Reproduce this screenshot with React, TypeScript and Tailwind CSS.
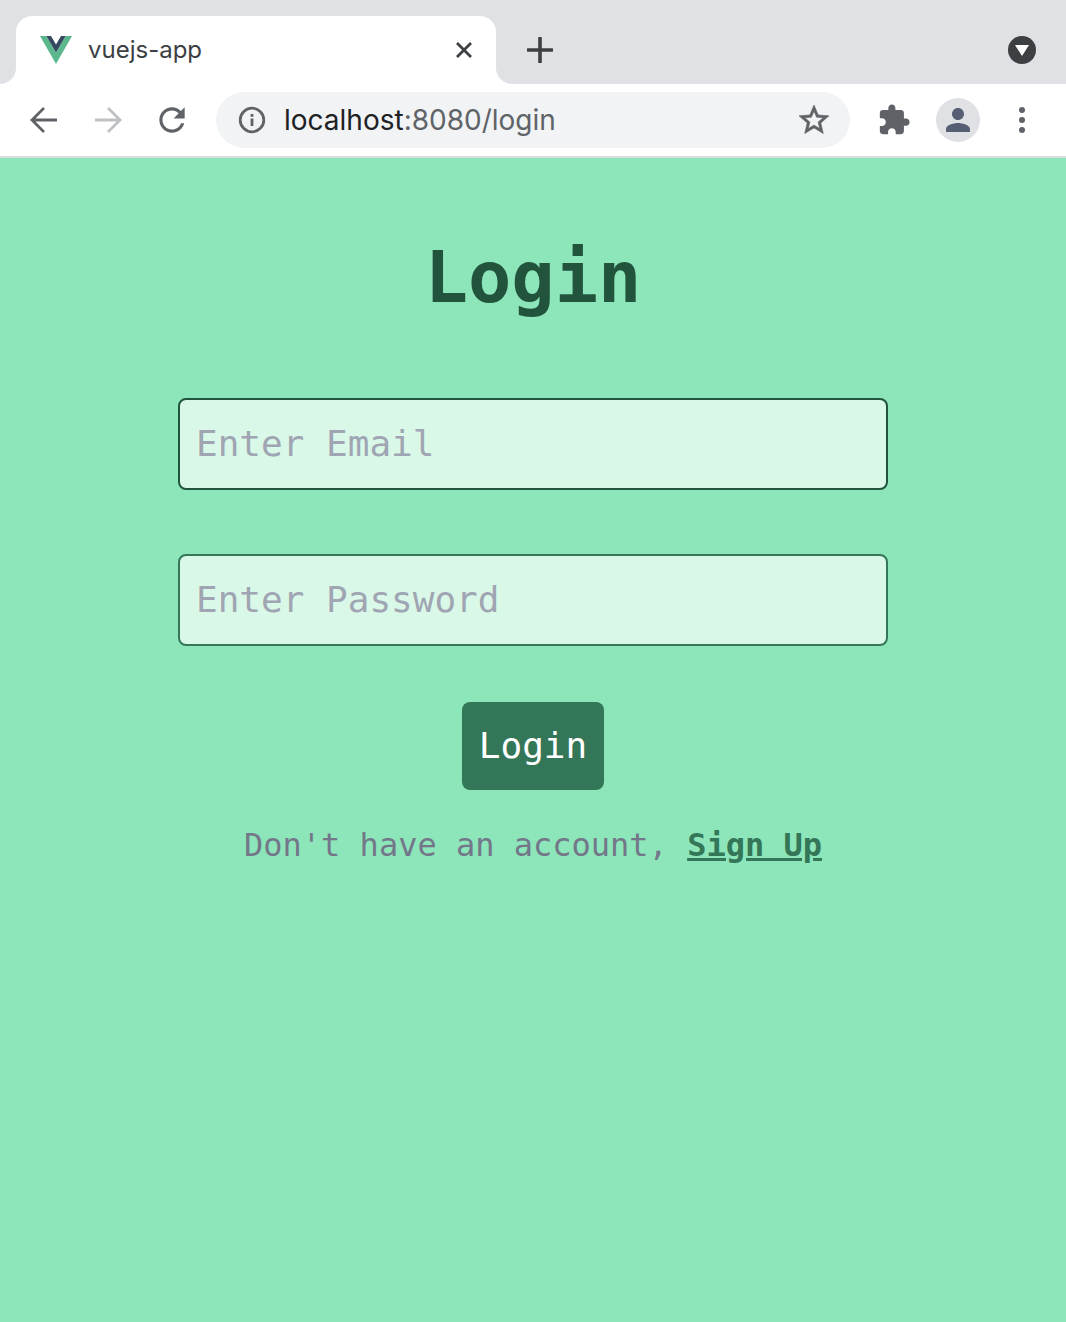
import React from 'react';

const MONO = 'font-["DejaVu_Sans_Mono",monospace]';

const ToolbarIcon = ({ children }: { children: React.ReactNode }) => (
  <div className="w-16 h-14 flex items-center justify-center shrink-0">{children}</div>
);

const VueLogo = () => (
  <svg width="32" height="28" viewBox="0 0 32 28" className="shrink-0 mt-[2px]">
    <polygon points="0,0 6.4,0 16,16.6 25.6,0 32,0 16,28" fill="#5cb88c" />
    <polygon points="6.4,0 11,0 16,8.4 21,0 25.6,0 16,16.6" fill="#35495e" />
  </svg>
);

const BrowserChrome = () => (
  <div className="font-['Inter',sans-serif] shrink-0">
    {/* вкладки */}
    <div className="h-4 bg-[#dfe1e5]" />
    <div className="h-[68px] flex bg-white">
      <div className="w-4 bg-[#dfe1e5] rounded-br-2xl" />
      <div className="w-[480px] bg-[#dfe1e5]">
        <div className="h-full bg-white rounded-t-2xl flex items-center pl-6 pr-[22px] pb-[2px]">
          <VueLogo />
          <span className="ml-4 text-[24px] leading-none text-[#3c4043] flex-1 mt-[2px]">vuejs-app</span>
          <svg width="20" height="20" viewBox="0 0 20 20" className="mt-[2px]">
            <path d="M3 3l14 14M17 3L3 17" stroke="#3c4043" strokeWidth="2.8" />
          </svg>
        </div>
      </div>
      <div className="flex-1 bg-[#dfe1e5] rounded-bl-2xl flex items-center pl-[31px] pr-[30px]">
        <svg width="26" height="26" viewBox="0 0 26 26">
          <path d="M13 1v24M1 13h24" stroke="#3c4043" strokeWidth="3.6" strokeLinecap="round" />
        </svg>
        <div className="ml-auto w-7 h-7 rounded-full bg-[#3c4043] flex items-center justify-center">
          <svg width="14" height="11" viewBox="0 0 14 11">
            <polygon points="0,0 14,0 7,11" fill="#fff" />
          </svg>
        </div>
      </div>
    </div>

    {/* адресная строка */}
    <div className="h-[74px] bg-white border-b-2 border-[#dadce0] flex items-start pt-2 pl-3 pr-3">
      <div className="flex -mt-2 h-[72px] items-center">
        <ToolbarIcon>
          <svg width="30" height="30" viewBox="0 0 30 30" fill="none" stroke="#5f6368" strokeWidth="2.8">
            <path d="M28 15H4M15 3L3 15l12 12" />
          </svg>
        </ToolbarIcon>
        <ToolbarIcon>
          <svg width="30" height="30" viewBox="0 0 30 30" fill="none" stroke="#bdc1c6" strokeWidth="2.8">
            <path d="M2 15h24M15 3l12 12-12 12" />
          </svg>
        </ToolbarIcon>
        <ToolbarIcon>
          <svg width="38" height="38" viewBox="0 0 24 24" fill="#5f6368">
            <path d="M17.65 6.35C16.2 4.9 14.21 4 12 4c-4.42 0-7.99 3.58-7.99 8s3.57 8 7.99 8c3.73 0 6.84-2.55 7.73-6h-2.08c-.82 2.33-3.04 4-5.65 4-3.31 0-6-2.69-6-6s2.69-6 6-6c1.66 0 3.14.69 4.22 1.78L13 11h7V4l-2.35 2.35z" />
          </svg>
        </ToolbarIcon>
      </div>
      <div className="ml-3 w-[634px] h-14 rounded-full bg-[#f1f3f4] flex items-center pl-[22px] pr-[18px]">
        <svg width="28" height="28" viewBox="0 0 28 28" fill="none">
          <circle cx="14" cy="14" r="11.8" stroke="#5f6368" strokeWidth="2.8" />
          <rect x="12.6" y="12.5" width="2.8" height="7.5" fill="#5f6368" />
          <rect x="12.6" y="8" width="2.8" height="2.8" fill="#5f6368" />
        </svg>
        <span className="ml-[18px] text-[28px] leading-none text-[#202124] flex-1">
          localhost<span className="text-[#5f6368]">:8080/login</span>
        </span>
        <svg width="36" height="36" viewBox="0 0 24 24" fill="#5f6368" stroke="#5f6368" strokeWidth="0.4">
          <path d="M22 9.24l-7.19-.62L12 2 9.19 8.63 2 9.24l5.46 4.73L5.82 21 12 17.27 18.18 21l-1.63-7.03L22 9.24zM12 15.4l-3.76 2.27 1-4.28-3.32-2.88 4.38-.38L12 6.1l1.71 4.04 4.38.38-3.32 2.88 1 4.28L12 15.4z" />
        </svg>
      </div>
      <div className="ml-3 flex -mt-2 h-[72px] items-center">
        <ToolbarIcon>
          <svg width="34" height="34" viewBox="0 0 24 24" fill="#5f6368">
            <path d="M20.5 11H19V7c0-1.1-.9-2-2-2h-4V3.5C13 2.12 11.88 1 10.5 1S8 2.12 8 3.5V5H4c-1.1 0-1.99.9-1.99 2v3.8H3.5c1.49 0 2.7 1.21 2.7 2.7s-1.21 2.7-2.7 2.7H2V20c0 1.1.9 2 2 2h3.8v-1.5c0-1.49 1.21-2.7 2.7-2.7 1.49 0 2.7 1.21 2.7 2.7V22H17c1.1 0 2-.9 2-2v-4h1.5c1.38 0 2.5-1.12 2.5-2.5S21.88 11 20.5 11z" />
          </svg>
        </ToolbarIcon>
        <ToolbarIcon>
          <div className="w-11 h-11 rounded-full bg-[#dfe1e5] flex items-center justify-center">
            <svg width="36" height="36" viewBox="0 0 24 24" fill="#565e73">
              <path d="M12 12c2.21 0 4-1.79 4-4s-1.79-4-4-4-4 1.79-4 4 1.79 4 4 4zm0 2c-2.67 0-8 1.34-8 4v2h16v-2c0-2.66-5.33-4-8-4z" />
            </svg>
          </div>
        </ToolbarIcon>
        <ToolbarIcon>
          <div className="flex flex-col gap-1">
            <span className="w-[6px] h-[6px] rounded-full bg-[#5f6368]" />
            <span className="w-[6px] h-[6px] rounded-full bg-[#5f6368]" />
            <span className="w-[6px] h-[6px] rounded-full bg-[#5f6368]" />
          </div>
        </ToolbarIcon>
      </div>
    </div>
  </div>
);

export default function App() {
  return (
    <div className="min-h-screen flex flex-col bg-[#8de6b9]">
      <BrowserChrome />
      <main className={`flex-1 flex flex-col items-center ${MONO}`}>
        <h1 className="mt-[77px] text-[72px] leading-[84px] font-bold text-[#22543d]">Login</h1>
        <input
          type="email"
          placeholder="Enter Email"
          className="mt-[79px] w-[710px] h-[92px] pl-4 pr-[17px] pb-[2px] rounded-lg border-2 border-[#22543d] bg-[#daf8e7] text-[36px] outline-none placeholder:text-[#9fa5b2]"
        />
        <input
          type="password"
          placeholder="Enter Password"
          className="mt-16 w-[710px] h-[92px] pl-4 pr-[17px] pb-[2px] rounded-lg border-2 border-[#347758] bg-[#daf8e7] text-[36px] outline-none placeholder:text-[#9fa5b2]"
        />
        <button className="mt-14 w-[142px] h-[88px] rounded-lg bg-[#347758] text-white text-[36px]">
          Login
        </button>
        <p className="mt-[33px] text-[32px] leading-[44px] text-[#737789]">
          Don't have an account,{' '}
          <a className="font-bold underline text-[#347758]">Sign Up</a>
        </p>
      </main>
    </div>
  );
}
